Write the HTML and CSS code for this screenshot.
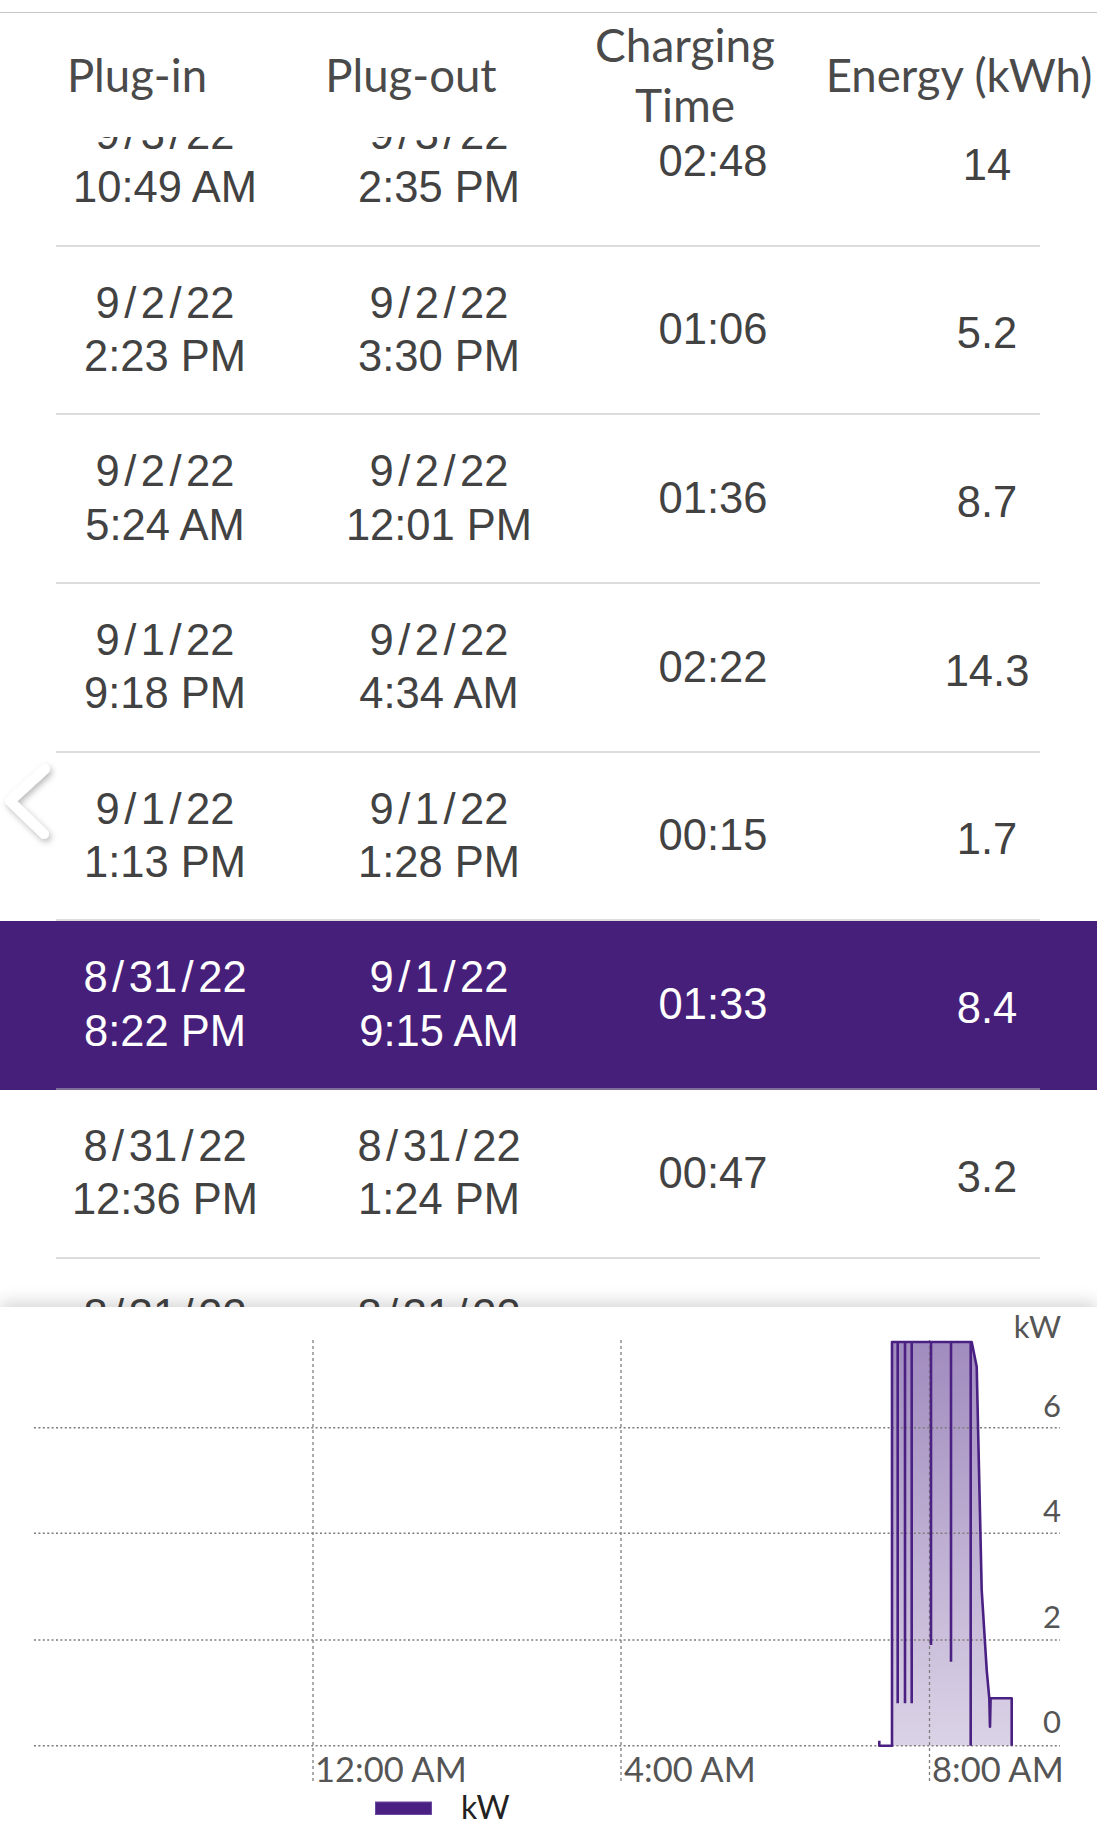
FILE: index.html
```html
<!DOCTYPE html>
<html lang="en">
<head>
<meta charset="utf-8">
<title>Charging sessions</title>
<link rel="stylesheet" href="styles.css">
</head>
<body>
<div class="screen">
  <div class="table-area">
    <div class="topline"></div>
    <div class="thead">
      <div class="th">Plug-in</div>
      <div class="th">Plug-out</div>
      <div class="th th-small">Charging<br>Time</div>
      <div class="th">Energy (kWh)</div>
    </div>
    <div class="tbody">
      <div class="row">
        <div class="cells">
          <div class="dt">9<span class="sl">/</span>3<span class="sl">/</span>22<br>10:49 AM</div>
          <div class="dt">9<span class="sl">/</span>3<span class="sl">/</span>22<br>2:35 PM</div>
          <div class="dur">02:48</div>
          <div class="kwh">14</div>
        </div>
        <div class="sep"></div>
      </div>
      <div class="row">
        <div class="cells">
          <div class="dt">9<span class="sl">/</span>2<span class="sl">/</span>22<br>2:23 PM</div>
          <div class="dt">9<span class="sl">/</span>2<span class="sl">/</span>22<br>3:30 PM</div>
          <div class="dur">01:06</div>
          <div class="kwh">5.2</div>
        </div>
        <div class="sep"></div>
      </div>
      <div class="row">
        <div class="cells">
          <div class="dt">9<span class="sl">/</span>2<span class="sl">/</span>22<br>5:24 AM</div>
          <div class="dt">9<span class="sl">/</span>2<span class="sl">/</span>22<br>12:01 PM</div>
          <div class="dur">01:36</div>
          <div class="kwh">8.7</div>
        </div>
        <div class="sep"></div>
      </div>
      <div class="row">
        <div class="cells">
          <div class="dt">9<span class="sl">/</span>1<span class="sl">/</span>22<br>9:18 PM</div>
          <div class="dt">9<span class="sl">/</span>2<span class="sl">/</span>22<br>4:34 AM</div>
          <div class="dur">02:22</div>
          <div class="kwh">14.3</div>
        </div>
        <div class="sep"></div>
      </div>
      <div class="row">
        <div class="cells">
          <div class="dt">9<span class="sl">/</span>1<span class="sl">/</span>22<br>1:13 PM</div>
          <div class="dt">9<span class="sl">/</span>1<span class="sl">/</span>22<br>1:28 PM</div>
          <div class="dur">00:15</div>
          <div class="kwh">1.7</div>
        </div>
        <div class="sep"></div>
      </div>
      <div class="row row-selected">
        <div class="cells">
          <div class="dt">8<span class="sl">/</span>31<span class="sl">/</span>22<br>8:22 PM</div>
          <div class="dt">9<span class="sl">/</span>1<span class="sl">/</span>22<br>9:15 AM</div>
          <div class="dur">01:33</div>
          <div class="kwh">8.4</div>
        </div>
        <div class="sep"></div>
      </div>
      <div class="row">
        <div class="cells">
          <div class="dt">8<span class="sl">/</span>31<span class="sl">/</span>22<br>12:36 PM</div>
          <div class="dt">8<span class="sl">/</span>31<span class="sl">/</span>22<br>1:24 PM</div>
          <div class="dur">00:47</div>
          <div class="kwh">3.2</div>
        </div>
        <div class="sep"></div>
      </div>
      <div class="row">
        <div class="cells">
          <div class="dt">8<span class="sl">/</span>31<span class="sl">/</span>22<br>8:02 AM</div>
          <div class="dt">8<span class="sl">/</span>31<span class="sl">/</span>22<br>9:40 AM</div>
          <div class="dur">01:12</div>
          <div class="kwh">6.1</div>
        </div>
        <div class="sep"></div>
      </div>
    </div>
    <svg class="back-arrow" width="70" height="100" viewBox="0 0 70 100" aria-hidden="true">
      <defs>
        <filter id="arrowShadow" x="-50%" y="-50%" width="200%" height="200%">
          <feDropShadow dx="2" dy="3" stdDeviation="3" flood-color="#000" flood-opacity="0.28"/>
        </filter>
      </defs>
      <path d="M47 12 L12 44 L46 77" fill="none" stroke="#ffffff" stroke-width="10" stroke-linecap="round" stroke-linejoin="round" filter="url(#arrowShadow)"/>
    </svg>
  </div>

  <div class="chart-panel">
    <svg class="chart" width="1097" height="515" viewBox="0 0 1097 515">
      <defs>
        <linearGradient id="areaFill" x1="0" y1="0" x2="0" y2="1">
          <stop offset="0" stop-color="#4a2183" stop-opacity="0.52"/>
          <stop offset="1" stop-color="#4a2183" stop-opacity="0.2"/>
        </linearGradient>
      </defs>
      <path d="M892 438.7 V35 H971.7 L976.7 59.7 L981.7 283 L986.7 363 L989.3 391.3 H1011.7 V438.7 Z" fill="url(#areaFill)"/>
      <g class="grid">
        <line x1="34" y1="120.7" x2="1060" y2="120.7"/>
        <line x1="34" y1="226.3" x2="1060" y2="226.3"/>
        <line x1="34" y1="333" x2="1060" y2="333"/>
        <line x1="34" y1="438.7" x2="1060" y2="438.7"/>
        <line class="vline" x1="313" y1="33" x2="313" y2="476"/>
        <line class="vline" x1="621" y1="33" x2="621" y2="476"/>
        <line class="vline" x1="929.5" y1="33" x2="929.5" y2="476"/>
      </g>
      <g class="series">
        <path d="M879.3 433.7 V438.7 H892 V35 H971.7 L976.7 59.7 L981.7 283 L986.7 363 L989.3 391.3 L990 419.7 L990.6 391.3 H1011.7 V438.7"/>
        <path d="M897.7 35 V396.3 M905 35 V396.3 M911.7 35 V396.3 M931 35 V338 M951 35 V354.7 M970.7 35 V438.7"/>
      </g>
      <g class="ylabels">
        <text x="1061" y="31">kW</text>
        <text x="1061" y="110">6</text>
        <text x="1061" y="215">4</text>
        <text x="1061" y="321">2</text>
        <text x="1061" y="426">0</text>
      </g>
      <g class="xlabels">
        <text x="315" y="475">12:00 AM</text>
        <text x="624" y="475">4:00 AM</text>
        <text x="932" y="475">8:00 AM</text>
      </g>
      <rect class="legend-swatch" x="375.5" y="495" width="56" height="12.5"/>
      <text class="legend-text" x="461" y="512">kW</text>
    </svg>
  </div>
</div>
</body>
</html>
```

FILE: styles.css
```css
html, body {
  margin: 0;
  padding: 0;
  background: #ffffff;
  overflow: hidden;
}

.screen {
  width: 1097px;
  height: 1822px;
  overflow: hidden;
  background: #ffffff;
}

.table-area {
  position: relative;
  height: 1307px;
  overflow: hidden;
  padding-top: 12px;
  box-sizing: border-box;
}

.topline {
  height: 1px;
  background: #c6c6c6;
}

.thead {
  position: relative;
  z-index: 2;
  display: grid;
  grid-template-columns: repeat(4, 274px);
  height: 124px;
  align-items: center;
  background: #ffffff;
  font-family: "Lato", "Noto Sans", sans-serif;
  color: #4a4a4a;
  font-size: 45.5px;
}

.th {
  text-align: center;
  white-space: nowrap;
  line-height: 1.2;
}

.th-small {
  font-size: 46px;
  line-height: 60px;
  padding-top: 0;
}

.tbody {
  margin-top: -59px;
}

.row-selected {
  background: #461f7b;
}

.cells {
  display: grid;
  grid-template-columns: repeat(4, 274px);
  padding-left: 28px;
  height: 166.7px;
  align-items: center;
  font-family: "Liberation Sans", Arial, sans-serif;
  font-size: 43.5px;
  line-height: 53.5px;
  color: #424242;
  text-align: center;
  white-space: nowrap;
}

.row-selected .cells {
  color: #ffffff;
}

.sl {
  margin: 0 4.5px;
}

.kwh {
  padding-top: 8px;
}

.sep {
  height: 2px;
  margin: 0 57px 0 56px;
  background: rgba(185, 185, 185, 0.5);
}

.back-arrow {
  position: absolute;
  left: -2px;
  top: 757px;
  z-index: 3;
}

.chart-panel {
  position: relative;
  z-index: 4;
  height: 515px;
  background: #ffffff;
  box-shadow: 0 -5px 16px rgba(0, 0, 0, 0.16);
}

.chart {
  display: block;
}

.grid line {
  stroke: #7d7d7d;
  stroke-width: 1.5;
  stroke-dasharray: 2 2.4;
}

.grid .vline {
  stroke-width: 1.3;
  stroke-dasharray: 3 3;
}

.series path {
  fill: none;
  stroke: #4a2183;
  stroke-width: 2.6;
  stroke-linejoin: round;
}

.ylabels text {
  font-family: "Lato", "Noto Sans", sans-serif;
  font-size: 31px;
  fill: #555555;
  text-anchor: end;
}

.xlabels text {
  font-family: "Lato", "Noto Sans", sans-serif;
  font-size: 34.5px;
  fill: #555555;
}

.legend-swatch {
  fill: #4a2183;
  stroke: #6a4aa0;
  stroke-width: 1;
}

.legend-text {
  font-family: "Lato", "Noto Sans", sans-serif;
  font-size: 32px;
  fill: #222222;
}
```
